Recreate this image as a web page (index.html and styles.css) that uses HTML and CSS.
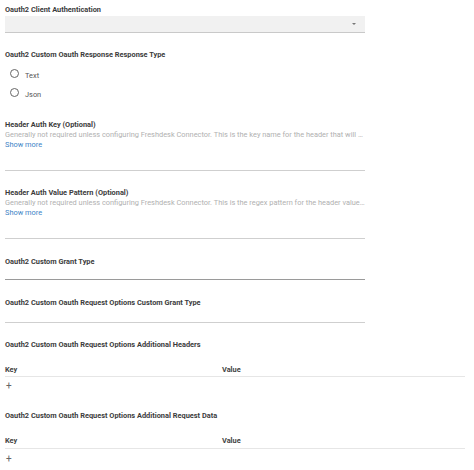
FILE: index.html
```html
<!DOCTYPE html>
<html>
<head>
<meta charset="utf-8">
<link rel="stylesheet" href="styles.css">
</head>
<body>
<div class="form">
  <div class="label l1">Oauth2 Client Authentication</div>
  <div class="select"><span class="caret"></span></div>

  <div class="label l2">Oauth2 Custom Oauth Response Response Type</div>
  <div class="radios">
    <div class="radio"><span class="circle"></span><span class="rtext">Text</span></div>
    <div class="radio"><span class="circle"></span><span class="rtext">Json</span></div>
  </div>

  <div class="label l3">Header Auth Key (Optional)</div>
  <div class="desc">Generally not required unless configuring Freshdesk Connector. This is the key name for the header that will be used when making requests to the API</div>
  <div class="more">Show more</div>
  <div class="input tall"></div>

  <div class="label l4">Header Auth Value Pattern (Optional)</div>
  <div class="desc">Generally not required unless configuring Freshdesk Connector. This is the regex pattern for the header value that will be used when making requests</div>
  <div class="more">Show more</div>
  <div class="input tall"></div>

  <div class="label l5">Oauth2 Custom Grant Type</div>
  <div class="input dark short"></div>

  <div class="label l6">Oauth2 Custom Oauth Request Options Custom Grant Type</div>
  <div class="input mid"></div>

  <div class="label l7">Oauth2 Custom Oauth Request Options Additional Headers</div>
  <div class="kv kv1">
    <div class="kvhead"><span class="kcol">Key</span><span class="vcol">Value</span></div>
    <div class="plus">+</div>
  </div>

  <div class="label l8">Oauth2 Custom Oauth Request Options Additional Request Data</div>
  <div class="kv kv2">
    <div class="kvhead"><span class="kcol">Key</span><span class="vcol">Value</span></div>
    <div class="plus">+</div>
  </div>
</div>
</body>
</html>
```

FILE: styles.css
```css
html, body {
  margin: 0;
  padding: 0;
  background: #ffffff;
}
body {
  font-family: Roboto, "Noto Sans", "Liberation Sans", sans-serif;
  font-size: 7.4px;
  line-height: 10px;
  color: #333;
}
.form {
  padding: 5px 5px 0 5px;
  display: flex;
  flex-direction: column;
}
.label {
  font-weight: 700;
  color: #3c3c3c;
  height: 10px;
  white-space: nowrap;
}
.l2 { margin-top: 17px; }
.l3 { margin-top: 16px; }
.l4 { margin-top: 17px; }
.l5 { margin-top: 18px; }
.l6 { margin-top: 18px; }
.l7 { margin-top: 17px; }
.l8 { margin-top: 20px; }

.select {
  margin-top: 1px;
  width: 360px;
  height: 16px;
  background: #f1f1f1;
  border-bottom: 1px solid #c9c9c9;
  position: relative;
}
.caret {
  position: absolute;
  right: 9px;
  top: 7px;
  width: 0;
  height: 0;
  border-left: 2.5px solid transparent;
  border-right: 2.5px solid transparent;
  border-top: 2.5px solid #777;
}
.radios {
  margin-top: 5px;
  display: flex;
  flex-direction: column;
}
.radio {
  height: 19.5px;
  display: flex;
  align-items: center;
  padding-left: 5px;
}
.circle {
  width: 7px;
  height: 7px;
  border: 1px solid #666;
  border-radius: 50%;
  box-sizing: content-box;
  margin-top: -3px;
}
.rtext {
  margin-left: 6px;
  color: #555;
  margin-top: 2px;
}
.desc {
  width: 360px;
  color: #b0b0b0;
  white-space: nowrap;
  overflow: hidden;
  text-overflow: ellipsis;
}
.more {
  color: #3d84c6;
}
.input {
  width: 360px;
  border-bottom: 1px solid #cfcfcf;
  box-sizing: border-box;
}
.tall { height: 21px; }
.short { height: 13px; }
.mid { height: 15px; }
.dark { border-bottom-color: #9a9a9a; }
.kv {
  width: 460px;
  display: flex;
  flex-direction: column;
}
.kvhead {
  margin-top: 15px;
  display: flex;
  padding-bottom: 2px;
  border-bottom: 1px solid #e6e6e6;
  font-weight: 700;
  color: #444;
}
.kv1 .kvhead { padding-bottom: 1px; }
.kcol { width: 217px; }
.vcol { flex: 1; }
.plus {
  margin-top: 4px;
  padding-left: 1px;
  font-size: 10px;
  color: #666;
  height: 10px;
  line-height: 10px;
}
.kv2 .plus { margin-top: 5px; }
```
